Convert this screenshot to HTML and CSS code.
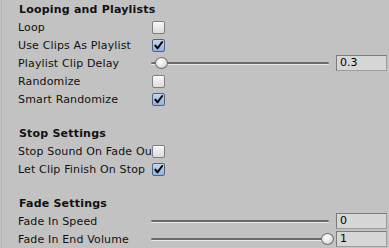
FILE: index.html
```html
<!DOCTYPE html>
<html lang="en">
<head>
	<title>Playlist Settings</title>
	<meta charset="utf-8">
	<link rel="stylesheet" href="styles.css">
</head>
<body>
	<div class="inspector">
		<div class="section">
			<div class="header">Looping and Playlists</div>
			<div class="row">
				<span class="label">Loop</span>
				<span class="check"></span>
			</div>
			<div class="row">
				<span class="label">Use Clips As Playlist</span>
				<span class="check on"><svg viewBox="0 0 12 12"><path d="M2.5 6.2 L5 9 L10 2.2" /></svg></span>
			</div>
			<div class="row">
				<span class="label">Playlist Clip Delay</span>
				<div class="slider">
					<div class="track"><span class="thumb" style="left: 4px"></span></div>
					<span class="field">0.3</span>
				</div>
			</div>
			<div class="row">
				<span class="label">Randomize</span>
				<span class="check"></span>
			</div>
			<div class="row">
				<span class="label">Smart Randomize</span>
				<span class="check on"><svg viewBox="0 0 12 12"><path d="M2.5 6.2 L5 9 L10 2.2" /></svg></span>
			</div>
		</div>

		<div class="section">
			<div class="header">Stop Settings</div>
			<div class="row">
				<span class="label">Stop Sound On Fade Out</span>
				<span class="check"></span>
			</div>
			<div class="row">
				<span class="label">Let Clip Finish On Stop</span>
				<span class="check on"><svg viewBox="0 0 12 12"><path d="M2.5 6.2 L5 9 L10 2.2" /></svg></span>
			</div>
		</div>

		<div class="section">
			<div class="header">Fade Settings</div>
			<div class="row">
				<span class="label">Fade In Speed</span>
				<div class="slider">
					<div class="track"></div>
					<span class="field">0</span>
				</div>
			</div>
			<div class="row">
				<span class="label">Fade In End Volume</span>
				<div class="slider">
					<div class="track"><span class="thumb" style="left: 170px"></span></div>
					<span class="field">1</span>
				</div>
			</div>
		</div>
	</div>
</body>
</html>
```

FILE: styles.css
```css
body {
	margin: 0;
	padding: 0;
	background: #c2c2c2;
	color: #111;
	font-family: "DejaVu Sans", Verdana, sans-serif;
	font-size: 11px;
	overflow: hidden;
}

.inspector {
	display: flex;
	flex-direction: column;
	gap: 18px;
	padding: 2px 0 0 16px;
	margin-left: 1px;
	border-left: 1px solid #b4b4b4;
	height: 248px;
	box-sizing: border-box;
}

.section {
	display: flex;
	flex-direction: column;
}

.header {
	height: 16px;
	line-height: 16px;
	font-weight: bold;
	padding-left: 1px;
	letter-spacing: 0.2px;
}

.row {
	height: 18px;
	display: flex;
	align-items: center;
}

.label {
	width: 134px;
	flex: none;
	white-space: nowrap;
	overflow: hidden;
	letter-spacing: 0.15px;
}

.check {
	width: 11px;
	height: 11px;
	border: 1px solid #7f7f7f;
	border-radius: 2px;
	background: linear-gradient(#f6f6f6, #dcdcdc);
	box-shadow: inset 0 1px 0 #fff;
}

.check.on {
	border-color: #4e6480;
	background: linear-gradient(#c4d6ee, #94b2da);
	box-shadow: none;
}

.check svg {
	display: block;
	width: 11px;
	height: 11px;
}

.check svg path {
	fill: none;
	stroke: #000;
	stroke-width: 2.2;
	stroke-linecap: round;
	stroke-linejoin: round;
}

.slider {
	display: flex;
	align-items: center;
	gap: 7px;
	margin-left: -1px;
}

.track {
	position: relative;
	width: 178px;
	height: 2px;
	background: #6a6a6a;
	border-radius: 1px;
	box-shadow: 0 1px 0 #ececec;
}

.thumb {
	position: absolute;
	top: -5px;
	width: 11px;
	height: 10px;
	border: 1px solid #6e6e6e;
	border-radius: 50%;
	background: radial-gradient(circle at 40% 35%, #ffffff, #e4e4e4 55%, #b8b8b8);
}

.field {
	width: 46px;
	height: 14px;
	line-height: 14px;
	padding-left: 3px;
	border: 1px solid #7c7c7c;
	border-bottom-color: #9c9c9c;
	border-right-color: #9c9c9c;
	background: #d6d6d6;
	color: #000;
}
```
